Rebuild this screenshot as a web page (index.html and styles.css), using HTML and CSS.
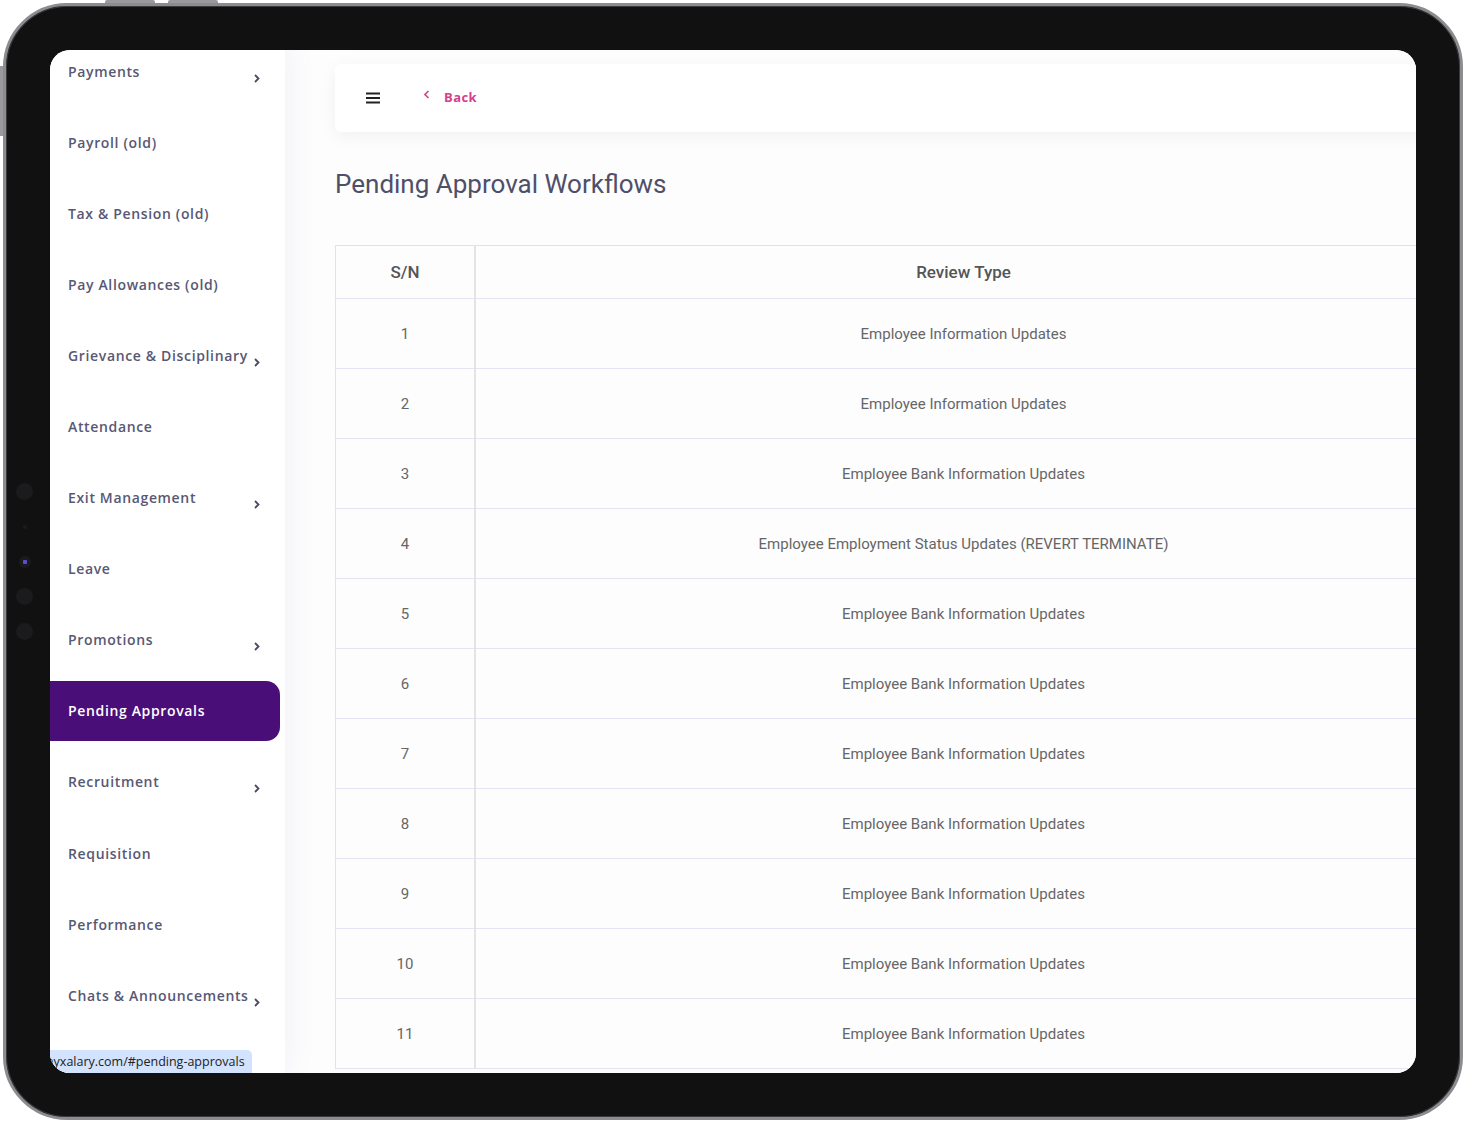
FILE: index.html
```html
<!DOCTYPE html>
<html lang="en">
<head>
  <meta charset="UTF-8">
  <meta name="viewport" content="width=device-width, initial-scale=1.0">
  <title>Pending Approvals</title>
  <link rel="stylesheet" href="styles.css">
</head>
<body>
<div class="device">
  <span class="device__btn device__btn--one"></span>
  <span class="device__btn device__btn--two"></span>
  <span class="device__side"></span>
  <div class="device__sensors">
    <span class="sensor"><i class="sensor__dot"></i></span>
    <span class="sensor"><i class="sensor__dot sensor__dot--tiny"></i></span>
    <span class="sensor"><i class="sensor__dot sensor__dot--cam"></i></span>
    <span class="sensor"><i class="sensor__dot"></i></span>
    <span class="sensor"><i class="sensor__dot"></i></span>
  </div>

  <div class="screen">
    <nav class="sidebar">
      <a class="nav-item">Payments <svg class="chev" viewBox="0 0 6 9"><path d="M1 1l3.5 3.5L1 8"/></svg></a>
      <a class="nav-item">Payroll (old)</a>
      <a class="nav-item">Tax &amp; Pension (old)</a>
      <a class="nav-item">Pay Allowances (old)</a>
      <a class="nav-item">Grievance &amp; Disciplinary <svg class="chev" viewBox="0 0 6 9"><path d="M1 1l3.5 3.5L1 8"/></svg></a>
      <a class="nav-item">Attendance</a>
      <a class="nav-item">Exit Management <svg class="chev" viewBox="0 0 6 9"><path d="M1 1l3.5 3.5L1 8"/></svg></a>
      <a class="nav-item">Leave</a>
      <a class="nav-item">Promotions <svg class="chev" viewBox="0 0 6 9"><path d="M1 1l3.5 3.5L1 8"/></svg></a>
      <a class="nav-item nav-item--active">Pending Approvals</a>
      <a class="nav-item">Recruitment <svg class="chev" viewBox="0 0 6 9"><path d="M1 1l3.5 3.5L1 8"/></svg></a>
      <a class="nav-item">Requisition</a>
      <a class="nav-item">Performance</a>
      <a class="nav-item">Chats &amp; Announcements <svg class="chev" viewBox="0 0 6 9"><path d="M1 1l3.5 3.5L1 8"/></svg></a>
    </nav>

    <main class="main">
      <header class="topbar">
        <svg class="burger" viewBox="0 0 14 12"><path d="M0 1.5h14M0 6h14M0 10.5h14"/></svg>
        <a class="back">
          <svg class="back__icon" viewBox="0 0 6 9"><path d="M4.5 1L1 4.5 4.5 8"/></svg>
          Back
        </a>
      </header>

      <h2 class="page-title">Pending Approval Workflows</h2>

      <table class="workflows">
        <thead>
          <tr><th>S/N</th><th>Review Type</th></tr>
        </thead>
        <tbody>
          <tr><td>1</td><td>Employee Information Updates</td></tr>
          <tr><td>2</td><td>Employee Information Updates</td></tr>
          <tr><td>3</td><td>Employee Bank Information Updates</td></tr>
          <tr><td>4</td><td>Employee Employment Status Updates (REVERT TERMINATE)</td></tr>
          <tr><td>5</td><td>Employee Bank Information Updates</td></tr>
          <tr><td>6</td><td>Employee Bank Information Updates</td></tr>
          <tr><td>7</td><td>Employee Bank Information Updates</td></tr>
          <tr><td>8</td><td>Employee Bank Information Updates</td></tr>
          <tr><td>9</td><td>Employee Bank Information Updates</td></tr>
          <tr><td>10</td><td>Employee Bank Information Updates</td></tr>
          <tr><td>11</td><td>Employee Bank Information Updates</td></tr>
        </tbody>
      </table>
    </main>

    <div class="status-url"><span>myxalary.com/#pending-approvals</span></div>
  </div>
</div>
</body>
</html>
```

FILE: styles.css
```css
html, body {
  margin: 0;
  background: #fff;
}

body {
  font-family: "Open Sans", sans-serif;
  overflow: hidden;
}

.device {
  position: relative;
  box-sizing: border-box;
  width: 1460px;
  height: 1117px;
  margin: 3px 0 0 3px;
  padding: 44px;
  border: 3px solid #8b8b90;
  border-radius: 64px;
  background: #111;
  box-shadow: inset 0 0 0 1px #3a3a3d;
}

.device__btn {
  position: absolute;
  top: -6px;
  width: 50px;
  height: 3px;
  background: #9a9a9e;
  border-radius: 2px 2px 0 0;
}

.device__btn--one {
  left: 99px;
}

.device__btn--two {
  left: 162px;
}

.device__side {
  position: absolute;
  left: -6px;
  top: 60px;
  width: 3px;
  height: 70px;
  background: #9a9a9e;
}

.device__sensors {
  position: absolute;
  left: 10px;
  top: 477px;
  display: flex;
  flex-direction: column;
  gap: 18px;
}

.sensor {
  display: flex;
  align-items: center;
  justify-content: center;
  width: 17px;
  height: 17px;
}

.sensor__dot {
  width: 17px;
  height: 17px;
  border-radius: 50%;
  background: #1b1b1d;
}

.sensor__dot--tiny {
  width: 4px;
  height: 4px;
}

.sensor__dot--cam {
  width: 12px;
  height: 12px;
  background: radial-gradient(circle, #5a4fd0 0 2px, #1b1b1d 2.5px);
}

.screen {
  position: relative;
  display: flex;
  width: 1366px;
  height: 1023px;
  border-radius: 20px;
  overflow: hidden;
  background: #fdfdfe;
}

.sidebar {
  flex: 0 0 235px;
  margin-top: -9px;
  background: #fff;
  box-shadow: 4px 0 30px rgba(30, 30, 80, 0.05);
  position: relative;
  z-index: 1;
}

.nav-item {
  display: flex;
  align-items: center;
  justify-content: space-between;
  box-sizing: border-box;
  width: 230px;
  height: 60px;
  margin-bottom: 11.1px;
  padding: 0 20px 0 18px;
  font-size: 14px;
  font-weight: 600;
  letter-spacing: 0.65px;
  color: #585874;
  white-space: nowrap;
  cursor: pointer;
}

.nav-item--active {
  background: #4a0e78;
  color: #fff;
  border-radius: 0 14px 14px 0;
}

.chev {
  width: 6px;
  height: 9px;
  margin-top: 14px;
  flex-shrink: 0;
  fill: none;
  stroke: #4b4b63;
  stroke-width: 1.8;
}

.main {
  flex: 1;
  min-width: 0;
  padding: 14px 0 0 50px;
  background: #fdfdfe;
}

.topbar {
  display: flex;
  align-items: center;
  width: 1200px;
  height: 68px;
  padding-left: 31px;
  background: #fff;
  border-radius: 6px;
  box-shadow: 0 4px 18px rgba(0, 0, 0, 0.05);
}

.burger {
  width: 14px;
  height: 12px;
  fill: none;
  stroke: #222;
  stroke-width: 2;
}

.back {
  display: flex;
  align-items: center;
  margin: -2px 0 0 44px;
  font-size: 13px;
  font-weight: 700;
  letter-spacing: 0.4px;
  color: #d4418f;
  cursor: pointer;
}

.back__icon {
  width: 6px;
  height: 9px;
  margin: -6px 14px 0 0;
  fill: none;
  stroke: #d4418f;
  stroke-width: 1.6;
}

.page-title {
  margin: 37px 0 46px;
  font-family: Roboto, sans-serif;
  font-size: 26px;
  font-weight: 400;
  color: #4f4f68;
}

.workflows {
  width: 1116px;
  border-collapse: collapse;
  font-family: Roboto, sans-serif;
  text-align: center;
  border-top: 1px solid #e2e2e2;
  border-left: 1px solid #e2e2e2;
}

.workflows th,
.workflows td {
  padding: 0;
  border-bottom: 1px solid #e6e4f3;
}

.workflows th {
  height: 52px;
  font-size: 17px;
  font-weight: 500;
  color: #555;
}

.workflows td {
  height: 69px;
  font-size: 15px;
  color: #666;
}

.workflows th:first-child,
.workflows td:first-child {
  width: 138px;
  border-right: 2px solid #e4e4e6;
}

.status-url {
  position: absolute;
  left: 0;
  bottom: 0;
  z-index: 2;
  width: 202px;
  height: 23px;
  overflow: hidden;
  background: #d3e3fd;
  border-radius: 0 5px 0 0;
  font-family: "Open Sans", sans-serif;
  font-size: 12.5px;
  line-height: 23px;
  color: #202124;
  white-space: nowrap;
}

.status-url span {
  margin-left: -8px;
}
```
